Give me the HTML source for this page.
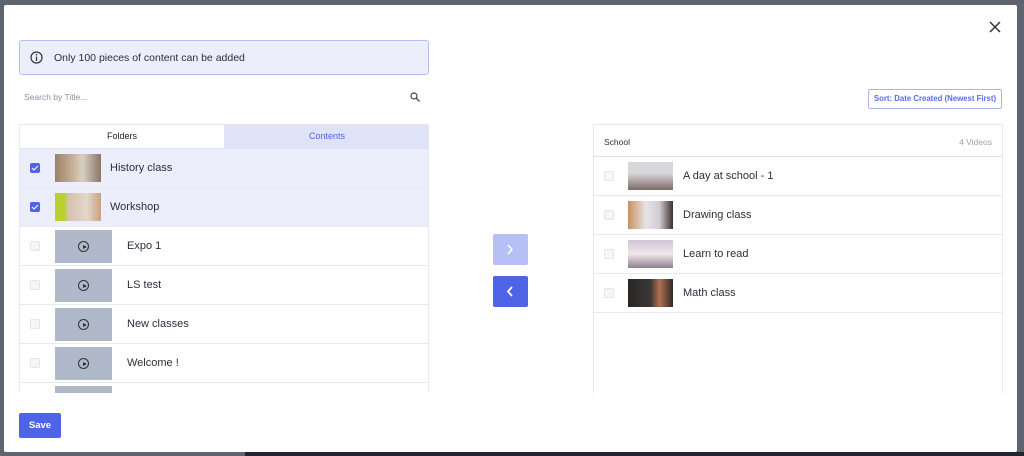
<!DOCTYPE html>
<html><head><style>
*{box-sizing:border-box;margin:0;padding:0}
body{width:1024px;height:456px;overflow:hidden;background:#5f6570;font-family:"Liberation Sans",sans-serif;position:relative;color:#222}
.abs{position:absolute}
.modal{left:4px;top:5px;width:1013px;height:447px;background:#fff;border-radius:2px}
.row{position:absolute;left:0;right:0;height:39px;border-bottom:1px solid #e8e9ef}
.cb{position:absolute;left:10px;top:14px;width:10px;height:10px;border:1px solid #e3e5ec;border-radius:2px;background:#f5f6f9}
.cbon{background:#4f63e6;border-color:#4f63e6}
.thumb{position:absolute;top:5px;height:28px}
.ph{position:absolute;left:35px;top:3px;width:57px;height:33px;background:#b0b9c9}
.ph:after{content:"";position:absolute;left:23px;top:11px;width:9px;height:9px;border:1.5px solid #333;border-radius:50%}
.ph:before{content:"";position:absolute;left:28px;top:15px;border-left:4px solid #333;border-top:2.5px solid transparent;border-bottom:2.5px solid transparent;z-index:1}
.t{position:absolute;top:13px;font-size:11px;color:#2a2f3a}
</style></head><body>
<div class="abs" style="left:245px;top:452px;width:779px;height:4px;background:#1f2430"></div>
<div class="abs modal"></div>
<svg class="abs" style="left:989px;top:21px" width="12" height="12"><path d="M1 1L11 11M11 1L1 11" stroke="#333" stroke-width="1.5"/></svg>
<div class="abs" style="left:19px;top:40px;width:410px;height:35px;background:#eceefb;border:1px solid #b5bdf3;border-radius:3px"></div>
<svg class="abs" style="left:30px;top:51px" width="13" height="13"><circle cx="6.5" cy="6.5" r="5.5" fill="none" stroke="#333" stroke-width="1.2"/><path d="M6.5 5.5V10" stroke="#333" stroke-width="1.2"/><circle cx="6.5" cy="3.7" r=".8" fill="#333"/></svg>
<div class="abs" style="left:54px;top:52px;font-size:10.5px;color:#2a2f3a">Only 100 pieces of content can be added</div>
<div class="abs" style="left:24px;top:92px;font-size:8.5px;color:#8a90a0">Search by Title...</div>
<svg class="abs" style="left:410px;top:92px" width="10" height="10"><circle cx="4" cy="4" r="3" fill="none" stroke="#444" stroke-width="1.2"/><path d="M6.3 6.3L9.5 9.5" stroke="#444" stroke-width="1.3"/></svg>
<div class="abs" style="left:19px;top:124px;width:410px;height:269px;border:1px solid #e8e9ef;border-bottom:none;overflow:hidden">
 <div class="abs" style="left:0;top:0;width:204px;height:24px;border-bottom:1px solid #dfe2ee;font-size:9px;text-align:center;line-height:23px">Folders</div>
 <div class="abs" style="left:204px;top:0;width:206px;height:24px;background:#dfe3f8;border-bottom:1px solid #dfe2ee;font-size:9px;color:#4f63e6;text-align:center;line-height:23px">Contents</div>
 <div class="row" style="top:24px;background:#eceffb"><div class="cb cbon"></div><svg class="abs" style="left:11px;top:16px" width="8" height="6"><path d="M1 3L3 5L7 1" stroke="#fff" fill="none" stroke-width="1"/></svg><div class="thumb" style="left:35px;width:46px;background:linear-gradient(90deg,#9a8068,#c9b39a 40%,#d8cfc5 60%,#8a7666)"></div><div class="t" style="left:90px">History class</div></div>
 <div class="row" style="top:63px;background:#eceffb"><div class="cb cbon"></div><svg class="abs" style="left:11px;top:16px" width="8" height="6"><path d="M1 3L3 5L7 1" stroke="#fff" fill="none" stroke-width="1"/></svg><div class="thumb" style="left:35px;width:46px;background:linear-gradient(90deg,#b8d030 20%,#d6c3b0 30%,#e3d7ca 70%,#c8a080)"></div><div class="t" style="left:90px">Workshop</div></div>
 <div class="row" style="top:102px"><div class="cb"></div><div class="ph"></div><div class="t" style="left:107px">Expo 1</div></div>
 <div class="row" style="top:141px"><div class="cb"></div><div class="ph"></div><div class="t" style="left:107px">LS test</div></div>
 <div class="row" style="top:180px"><div class="cb"></div><div class="ph"></div><div class="t" style="left:107px">New classes</div></div>
 <div class="row" style="top:219px"><div class="cb"></div><div class="ph"></div><div class="t" style="left:107px">Welcome !</div></div>
 <div class="row" style="top:258px"><div class="ph"></div></div>
</div>
<div class="abs" style="left:493px;top:234px;width:35px;height:31px;background:#b7c0f5;border-radius:2px"></div>
<svg class="abs" style="left:506px;top:244px" width="8" height="11"><path d="M2 1L6 5.5L2 10" stroke="#fff" fill="none" stroke-width="1.5"/></svg>
<div class="abs" style="left:493px;top:276px;width:35px;height:31px;background:#4f63e6;border-radius:2px"></div>
<svg class="abs" style="left:506px;top:286px" width="8" height="11"><path d="M6 1L2 5.5L6 10" stroke="#fff" fill="none" stroke-width="1.8"/></svg>
<div class="abs" style="left:868px;top:89px;width:134px;height:20px;border:1px solid #aab3f0;border-radius:2px;font-size:7.8px;font-weight:bold;color:#5a6ce6;text-align:center;line-height:18px;white-space:nowrap">Sort: Date Created (Newest First)</div>
<div class="abs" style="left:593px;top:124px;width:410px;height:269px;border:1px solid #e8e9ef;border-bottom:none;overflow:hidden">
 <div class="abs" style="left:0;top:0;right:0;height:32px;border-bottom:1px solid #dfe2ee"></div>
 <div class="abs" style="left:10px;top:12px;font-size:8.5px;color:#2a2f3a">School</div>
 <div class="abs" style="right:10px;top:12px;font-size:8.5px;color:#9aa0ad">4 Videos</div>
 <div class="row" style="top:32px"><div class="cb"></div><div class="thumb" style="left:34px;width:45px;background:linear-gradient(180deg,#d8d8da 40%,#7b6a66)"></div><div class="t" style="left:89px">A day at school - 1</div></div>
 <div class="row" style="top:71px"><div class="cb"></div><div class="thumb" style="left:34px;width:45px;background:linear-gradient(90deg,#c89060,#e6e4e6 40%,#d0ccd0 70%,#3a3030)"></div><div class="t" style="left:89px">Drawing class</div></div>
 <div class="row" style="top:110px"><div class="cb"></div><div class="thumb" style="left:34px;width:45px;background:linear-gradient(180deg,#cfc6d6,#efe7e8 50%,#8e8090)"></div><div class="t" style="left:89px">Learn to read</div></div>
 <div class="row" style="top:149px"><div class="cb"></div><div class="thumb" style="left:34px;width:45px;background:linear-gradient(90deg,#2a2624,#3a3836 50%,#b07050 70%,#302a28)"></div><div class="t" style="left:89px">Math class</div></div>
</div>
<div class="abs" style="left:19px;top:413px;width:42px;height:25px;background:#4f63e6;border-radius:2px;color:#fff;font-size:9.5px;font-weight:bold;text-align:center;line-height:25px">Save</div>
</body></html>
